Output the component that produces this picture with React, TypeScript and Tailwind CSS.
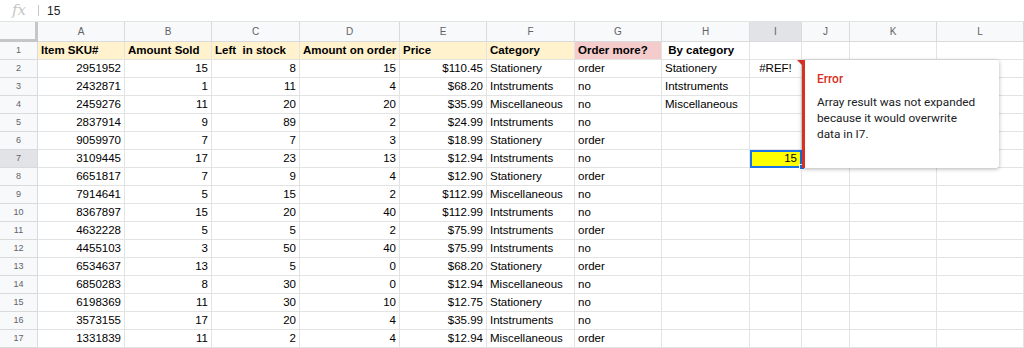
import React from 'react';

// Column widths (px) taken from the sheet: row header, A..L
const COLS = ['A', 'B', 'C', 'D', 'E', 'F', 'G', 'H', 'I', 'J', 'K', 'L'];

type Cell = { v: string; right?: boolean; bold?: boolean; bg?: string };

const header: Cell[] = [
  { v: 'Item SKU#', bold: true, bg: 'bg-[#fff2cc]' },
  { v: 'Amount Sold', bold: true, bg: 'bg-[#fff2cc]' },
  { v: 'Left  in stock', bold: true, bg: 'bg-[#fff2cc]' },
  { v: 'Amount on order', bold: true, bg: 'bg-[#fff2cc]' },
  { v: 'Price', bold: true, bg: 'bg-[#fff2cc]' },
  { v: 'Category', bold: true, bg: 'bg-[#fff2cc]' },
  { v: 'Order more?', bold: true, bg: 'bg-[#f4cccc]' },
  { v: ' By category', bold: true },
];

const data: string[][] = [
  ['2951952', '15', '8', '15', '$110.45', 'Stationery', 'order', 'Stationery', '#REF!'],
  ['2432871', '1', '11', '4', '$68.20', 'Intstruments', 'no', 'Intstruments'],
  ['2459276', '11', '20', '20', '$35.99', 'Miscellaneous', 'no', 'Miscellaneous'],
  ['2837914', '9', '89', '2', '$24.99', 'Intstruments', 'no'],
  ['9059970', '7', '7', '3', '$18.99', 'Stationery', 'order'],
  ['3109445', '17', '23', '13', '$12.94', 'Intstruments', 'no', '', '15'],
  ['6651817', '7', '9', '4', '$12.90', 'Stationery', 'order'],
  ['7914641', '5', '15', '2', '$112.99', 'Miscellaneous', 'no'],
  ['8367897', '15', '20', '40', '$112.99', 'Intstruments', 'no'],
  ['4632228', '5', '5', '2', '$75.99', 'Intstruments', 'order'],
  ['4455103', '3', '50', '40', '$75.99', 'Intstruments', 'no'],
  ['6534637', '13', '5', '0', '$68.20', 'Stationery', 'order'],
  ['6850283', '8', '30', '0', '$12.94', 'Miscellaneous', 'no'],
  ['6198369', '11', '30', '10', '$12.75', 'Stationery', 'no'],
  ['3573155', '17', '20', '4', '$35.99', 'Intstruments', 'no'],
  ['1331839', '11', '2', '4', '$12.94', 'Miscellaneous', 'order'],
];

const gridCols =
  'grid grid-cols-[38px_87px_87px_88px_100px_87px_88px_87px_88px_52px_48px_87px_1fr]';

function FormulaBar() {
  return (
    <div className="flex items-center h-[22px] border-b border-[#e2e3e3] bg-white">
      <div className="w-[38px] flex items-center justify-center">
        <span className="text-[#c4c7c5] italic text-[15px] font-['DejaVu_Serif',serif]">fx</span>
      </div>
      <div className="h-[11px] w-px bg-[#c4c7c5]" />
      <span className="ml-[8px] text-[12px] text-[#202124] font-['Liberation_Sans',Arial,sans-serif]">15</span>
    </div>
  );
}

function ColumnHeaders() {
  return (
    <div className={`${gridCols} h-[20px]`}>
      <div className="bg-[#f8f9fa] border-r-[3px] border-b-[3px] border-[#c4c7c5]" />
      {COLS.map((c) => (
        <div
          key={c}
          className={`flex items-center justify-center border-r border-b border-[#d9dadb] text-[10px] text-[#5f6368] ${
            c === 'I' ? 'bg-[#e1e3e6]' : 'bg-[#f8f9fa]'
          }`}
        >
          {c}
        </div>
      ))}
    </div>
  );
}

function RowNum({ n }: { n: number }) {
  return (
    <div
      className={`flex items-center justify-center border-r border-b border-[#d9dadb] text-[9px] text-[#5f6368] ${
        n === 7 ? 'bg-[#e1e3e6]' : 'bg-[#f8f9fa]'
      }`}
    >
      {n}
    </div>
  );
}

export default function App() {
  return (
    <div className="relative w-[1024px] h-[348px] overflow-hidden bg-white font-['Liberation_Sans',Arial,sans-serif] text-[11.5px] text-black">
      <FormulaBar />
      <ColumnHeaders />

      {/* Row 1: headings */}
      <div className={`${gridCols} h-[18px]`}>
        <RowNum n={1} />
        {COLS.map((c, i) => {
          const cell = header[i];
          return (
            <div
              key={c}
              className={`flex items-center px-[3px] border-r border-b border-[#e2e3e3] whitespace-pre overflow-hidden ${
                cell?.bg ?? ''
              } ${cell?.bold ? 'font-bold' : ''}`}
            >
              {cell?.v}
            </div>
          );
        })}
      </div>

      {/* Data rows */}
      {data.map((row, r) => (
        <div key={r} className={`${gridCols} h-[18px]`}>
          <RowNum n={r + 2} />
          {COLS.map((c, i) => {
            const v = row[i] ?? '';
            const numeric = i <= 4 || i === 8;
            const selected = r === 5 && c === 'I';
            return (
              <div
                key={c}
                className={`flex items-center px-[3px] whitespace-pre overflow-hidden ${
                  numeric && c !== 'I' ? 'justify-end' : ''
                } ${c === 'I' && r === 0 ? 'justify-center' : ''} ${
                  selected
                    ? 'justify-end bg-[#ffff00] border-2 border-[#1a73e8]'
                    : 'border-r border-b border-[#e2e3e3]'
                }`}
              >
                {v}
              </div>
            );
          })}
        </div>
      ))}

      {/* Fill handle on selected cell */}
      <div className="absolute left-[799px] top-[164px] w-[6px] h-[6px] bg-[#1a73e8] border border-white" />

      {/* Error marker triangle on I2 */}
      <div className="absolute left-[797px] top-[60px] w-0 h-0 border-l-[6px] border-l-transparent border-t-[6px] border-t-[#d93025]" />

      {/* Error tooltip */}
      <div className="absolute left-[802px] top-[60px] w-[197px] h-[108px] flex bg-white shadow-[0_1px_4px_rgba(0,0,0,0.3)] rounded-r-[3px] font-['Roboto',sans-serif]">
        <div className="w-[3px] bg-[#d93025]" />
        <div className="pl-[12px] pt-[11px] pr-[8px]">
          <div className="text-[12px] font-medium text-[#d93025] leading-[16px]">Error</div>
          <div className="mt-[7px] text-[11.8px] text-[#202124] leading-[16px] whitespace-nowrap">
            Array result was not expanded
            <br />
            because it would overwrite
            <br />
            data in I7.
          </div>
        </div>
      </div>
    </div>
  );
}
